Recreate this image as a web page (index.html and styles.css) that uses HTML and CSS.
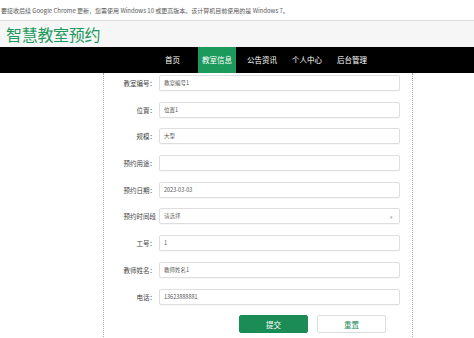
FILE: index.html
```html
<!DOCTYPE html>
<html lang="zh-CN">
<head>
  <meta charset="UTF-8">
  <title>智慧教室预约</title>
  <link rel="stylesheet" href="styles.css">
</head>
<body>
  <div class="notice">要接收后续 Google Chrome 更新，您需使用 Windows 10 或更高版本。该计算机目前使用的是 Windows 7。</div>

  <div class="header">
    <h1 class="logo">智慧教室预约</h1>
  </div>

  <div class="nav">
    <ul>
      <li class="first">首页</li>
      <li class="active">教室信息</li>
      <li>公告资讯</li>
      <li>个人中心</li>
      <li>后台管理</li>
    </ul>
  </div>

  <div class="main">
    <form class="book-form">
      <div class="row">
        <label>教室编号：</label>
        <input type="text" value="教室编号1">
      </div>
      <div class="row">
        <label>位置：</label>
        <input type="text" value="位置1">
      </div>
      <div class="row">
        <label>规模：</label>
        <input type="text" value="大型">
      </div>
      <div class="row">
        <label>预约用途：</label>
        <input type="text" value="">
      </div>
      <div class="row">
        <label>预约日期：</label>
        <input type="text" value="2023-03-03">
      </div>
      <div class="row">
        <label>预约时间段</label>
        <div class="select">
          <span>请选择</span>
          <span class="arrow">▾</span>
        </div>
      </div>
      <div class="row">
        <label>工号：</label>
        <input type="text" value="1">
      </div>
      <div class="row">
        <label>教师姓名：</label>
        <input type="text" value="教师姓名1">
      </div>
      <div class="row">
        <label>电话：</label>
        <input type="text" value="13623888881">
      </div>
      <div class="buttons">
        <button type="button" class="btn btn-submit">提交</button>
        <button type="button" class="btn btn-reset">重置</button>
      </div>
    </form>
  </div>
</body>
</html>
```

FILE: styles.css
```css
body {
  margin: 0;
  font-family: "Noto Sans CJK SC", "Noto Sans", sans-serif;
  color: #333;
  background: #fff;
  overflow: hidden;
}
.notice {
  height: 20px;
  line-height: 22px;
  font-size: 6px;
  color: #555;
  padding-left: 1px;
  border-bottom: 1px solid #dcdcdc;
  white-space: nowrap;
}
.header {
  height: 26px;
  background: #f6f6f6;
  display: flex;
  align-items: center;
  padding-left: 6px;
}
.logo {
  margin: 0;
  font-size: 16px;
  font-weight: normal;
  color: #1b9a5c;
  letter-spacing: -0.3px;
}
.nav {
  background: #000;
  height: 26px;
}
.nav ul {
  list-style: none;
  margin: 0;
  padding: 0 0 0 161px;
  display: flex;
  gap: 7px;
  height: 100%;
}
.nav li {
  color: #fff;
  font-size: 7.5px;
  line-height: 26px;
  padding: 0 4px;
}
.nav li.first {
  margin-right: 7px;
}
.nav li.active {
  background: #1b9a5c;
}
.main {
  margin-left: 103px;
  width: 308px;
  border-left: 1px dotted #aaa;
  border-right: 1px dotted #aaa;
  min-height: 270px;
  padding-top: 2px;
}
.row {
  display: flex;
  align-items: center;
  height: 16px;
  margin-bottom: 10.7px;
}
.row label {
  width: 52px;
  text-align: right;
  font-size: 6.5px;
  color: #444;
  margin-right: 3px;
}
.row input,
.row .select {
  box-sizing: border-box;
  width: 241px;
  height: 16px;
  border: 1px solid #dedede;
  border-radius: 2px;
  padding: 0 4px;
  font-family: inherit;
  font-size: 5.5px;
  color: #555;
  outline: none;
  box-shadow: 0 1px 1px rgba(0, 0, 0, 0.03);
}
.row .select {
  display: flex;
  align-items: center;
  justify-content: space-between;
  color: #777;
}
.row .select .arrow {
  color: #aaa;
  font-size: 5px;
  margin-right: 2px;
}
.buttons {
  display: flex;
  gap: 9px;
  padding-left: 135px;
}
.btn {
  width: 69px;
  height: 18px;
  border-radius: 2px;
  font-family: inherit;
  font-size: 7.5px;
  padding: 0;
  cursor: pointer;
}
.btn-submit {
  background: #1b8c55;
  border: 1px solid #1b8c55;
  color: #fff;
}
.btn-reset {
  background: #fff;
  border: 1px solid #ddd;
  color: #1b8c55;
}
```
